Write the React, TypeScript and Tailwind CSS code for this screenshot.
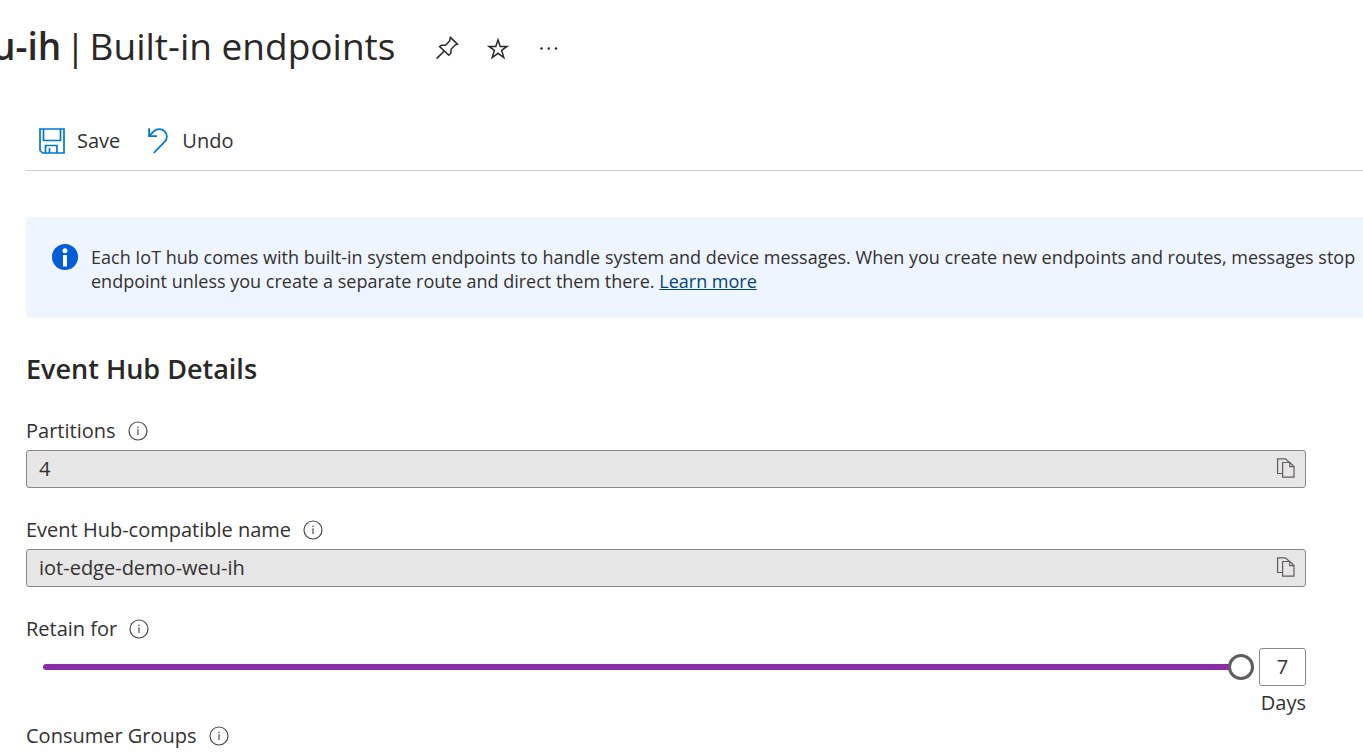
import { useState } from "react";
import type { CSSProperties, ReactNode } from "react";

function PinIcon() {
  return (
    <svg className="size-6" viewBox="0 0 24 24" fill="none" stroke="currentColor" strokeWidth="1.5" aria-hidden="true">
      <path d="M15.4 1.4 22.4 8.2 20.4 8.8 16.2 13 15.8 17.2 13.8 19.2 4.600 10.600 6.600 9.200 10.600 9.200 14.600 5Z" strokeLinejoin="miter" />
      <path d="M9.200 15 1.600 22.600" />
    </svg>
  );
}

function StarIcon() {
  return (
    <svg className="size-6" viewBox="0 0 24 24" fill="none" stroke="currentColor" strokeWidth="1.5" aria-hidden="true">
      <path d="M12 3.800 14.200 10.400H21L15.600 14.400 17.800 21.600 12 17.300 6.200 21.600 8.400 14.400 3 10.400H9.800Z" />
    </svg>
  );
}

function MoreIcon() {
  return (
    <svg className="size-6" viewBox="0 0 24 24" fill="currentColor" aria-hidden="true">
      <circle cx="4.5" cy="12.5" r="1.2" />
      <circle cx="11.8" cy="12.5" r="1.2" />
      <circle cx="19" cy="12.5" r="1.2" />
    </svg>
  );
}

function SaveIcon() {
  return (
    <svg className="size-[26px] text-[#0078d4]" viewBox="0 0 26 26" fill="none" stroke="currentColor" strokeWidth="1.7" aria-hidden="true">
      <path d="M1 1H25V25H3.500L1 22.500Z" />
      <path d="M4.500 1V12.500H21.500V1" />
      <path d="M6.500 25V17.500H18V25" />
      <path d="M10.500 20V25" />
    </svg>
  );
}

function UndoIcon() {
  return (
    <svg className="h-[26px] w-6 text-[#0078d4]" viewBox="0 0 24 26" fill="none" stroke="currentColor" strokeWidth="1.8" aria-hidden="true">
      <path d="M3.100 .3V8.100H11" />
      <path d="M3.300 7.900 8 3.200C11 .4 15.600 .3 18.500 3.100 21.700 6.200 21.600 10.600 18.700 13.700L7.800 25" />
    </svg>
  );
}

function InfoIcon() {
  return (
    <svg className="size-5" viewBox="0 0 20 20" fill="none" stroke="#4a4948" strokeWidth="1.2" aria-hidden="true">
      <circle cx="10" cy="10" r="9" />
      <path d="M10 8.300V14" />
      <circle cx="10" cy="6.200" r=".8" fill="#4a4948" stroke="none" />
    </svg>
  );
}

function InfoBadge() {
  return (
    <svg className="size-[26px] shrink-0" viewBox="0 0 26 26" aria-hidden="true">
      <circle cx="13" cy="13" r="13" fill="#015cda" />
      <circle cx="13" cy="6.800" r="2.500" fill="#fff" />
      <path d="M11 11H15V22.500H11Z" fill="#fff" />
    </svg>
  );
}

function CopyIcon() {
  return (
    <svg className="size-5" viewBox="0 0 20 20" fill="none" stroke="#605e5c" strokeWidth="1.200" aria-hidden="true">
      <path d="M6.500 15.500H1.600V.8H9.500L13.500 4.500" />
      <path d="M6.600 4.500H14L18 8.500V19.200H6.600Z" />
      <path d="M13.800 4.500V8.600H18" />
    </svg>
  );
}

function FieldLabel({ id, children }: { id?: string; children: ReactNode }) {
  return (
    <div className="flex h-[30px] items-center gap-3">
      <label htmlFor={id}>{children}</label>
      <button type="button" aria-label={`About ${children}`} className="cursor-pointer">
        <InfoIcon />
      </button>
    </div>
  );
}

function CopyField({ id, label, value }: { id: string; label: string; value: string }) {
  return (
    <div className="flex flex-col gap-1">
      <FieldLabel id={id}>{label}</FieldLabel>
      <div className="flex h-[38px] items-center rounded-[3px] border border-[#8a8886] bg-[#e6e6e6] pr-[9px] pb-0.5">
        <input id={id} readOnly value={value} className="h-full min-w-0 flex-1 bg-transparent pl-3 outline-none" />
        <button type="button" aria-label={`Copy ${label}`} className="cursor-pointer">
          <CopyIcon />
        </button>
      </div>
    </div>
  );
}

export default function App() {
  const [days, setDays] = useState(7);
  const fill = { "--fill": `${((days - 1) / 6) * 100}%` } as CSSProperties;

  return (
    <main className="overflow-x-hidden bg-white pl-[26px] font-['Open_Sans','Noto_Sans',sans-serif] text-[20px] text-[#323130]">
      <header className="-ml-[34px] flex h-24 items-center gap-10 whitespace-nowrap text-[#292827]">
        <h1 className="flex gap-1 pb-1 text-[37px]">
          <span className="font-semibold">u-ih</span>
          <span>|</span>
          <span>Built-in endpoints</span>
        </h1>
        <div className="flex items-center gap-[27px]">
          <button type="button" aria-label="Pin" className="cursor-pointer"><PinIcon /></button>
          <button type="button" aria-label="Favorite" className="cursor-pointer"><StarIcon /></button>
          <button type="button" aria-label="More" className="cursor-pointer"><MoreIcon /></button>
        </div>
      </header>

      <div className="mt-4 flex h-[59px] items-center gap-[26px] border-b border-[#d2d0ce] pl-[13px]">
        <button type="button" className="flex cursor-pointer items-center gap-3"><SaveIcon />Save</button>
        <button type="button" className="flex cursor-pointer items-center gap-3"><UndoIcon />Undo</button>
      </div>

      <section className="mt-[46px] flex h-[101px] gap-[13px] rounded-l-[3px] bg-[#eff5ff] pt-[27px] pl-[26px]">
        <InfoBadge />
        <p className="pt-px text-[18px] leading-6 whitespace-nowrap">
          Each IoT hub comes with built-in system endpoints to handle system and device messages. When you create new endpoints and routes, messages stop
          <br />
          endpoint unless you create a separate route and direct them there.{" "}
          <a href="#learn-more" className="text-[#004578] underline">Learn more</a>
        </p>
      </section>

      <section className="pr-[57px]">
        <h2 className="mt-8 text-[27px] leading-[38px] font-semibold text-[#292827]">Event Hub Details</h2>
        <div className="mt-7 flex flex-col gap-[27px]">
          <CopyField id="partitions" label="Partitions" value="4" />
          <CopyField id="hub-name" label="Event Hub-compatible name" value="iot-edge-demo-weu-ih" />
          <div className="flex flex-col gap-1">
            <FieldLabel id="retain">Retain for</FieldLabel>
            <div className="flex h-[38px] items-center gap-[5px] pl-[17px]">
              <input
                id="retain"
                type="range"
                min={1}
                max={7}
                value={days}
                onChange={(e) => setDays(Number(e.target.value))}
                style={fill}
                className="h-[26px] min-w-0 flex-1 cursor-pointer appearance-none bg-transparent [&::-webkit-slider-runnable-track]:h-1.5 [&::-webkit-slider-runnable-track]:rounded-full [&::-webkit-slider-runnable-track]:bg-[linear-gradient(to_right,#8a2da5_var(--fill),#c8c6c4_var(--fill))] [&::-webkit-slider-thumb]:-mt-2.5 [&::-webkit-slider-thumb]:size-[26px] [&::-webkit-slider-thumb]:appearance-none [&::-webkit-slider-thumb]:rounded-full [&::-webkit-slider-thumb]:border-3 [&::-webkit-slider-thumb]:border-solid [&::-webkit-slider-thumb]:border-[#605e5c] [&::-webkit-slider-thumb]:bg-white"
              />
              <input
                aria-label="Days to retain"
                value={days}
                onChange={(e) => setDays(Math.min(7, Math.max(1, Number(e.target.value) || 1)))}
                className="h-[38px] w-[47px] rounded-[3px] border border-[#8a8886] pb-0.5 text-center outline-none"
              />
            </div>
            <div className="text-right leading-[26px]">Days</div>
          </div>
        </div>
        <div className="mt-[5px]">
          <FieldLabel>Consumer Groups</FieldLabel>
        </div>
      </section>
    </main>
  );
}
